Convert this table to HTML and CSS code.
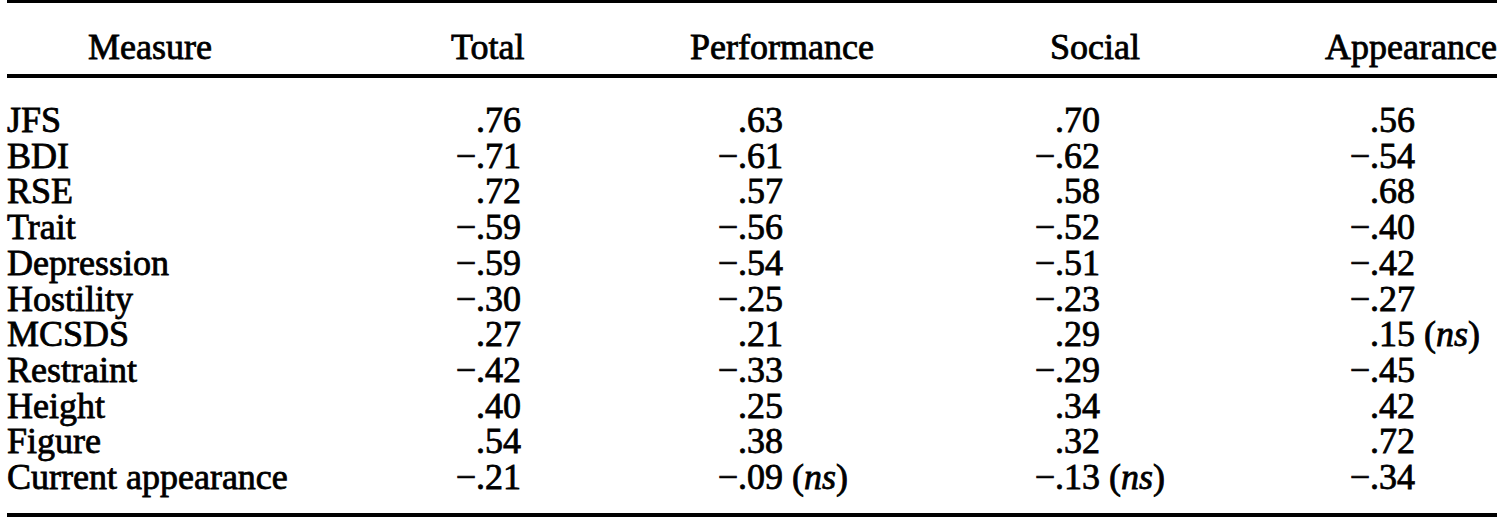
FILE: index.html
```html
<!DOCTYPE html>
<html>
<head>
    <meta charset="UTF-8">
    <title>Correlations of the subscales with other measures</title>
    <link rel="stylesheet" href="styles.css">
</head>
<body>
    <div class="table">
        <!-- Шапка таблицы -->
        <div class="grid head">
            <div class="th th-measure">Measure</div>
            <div class="th th-total">Total</div>
            <div class="th th-perf">Performance</div>
            <div class="th th-social">Social</div>
            <div class="th th-app">Appearance</div>
        </div>

        <!-- Строки: число выравнивается вправо, пометка (ns) висит справа -->
        <div class="grid body">
            <div class="label">JFS</div>
            <div class="num">.76</div><div class="note"></div>
            <div class="num">.63</div><div class="note"></div>
            <div class="num">.70</div><div class="note"></div>
            <div class="num">.56</div><div class="note"></div>

            <div class="label">BDI</div>
            <div class="num">&minus;.71</div><div class="note"></div>
            <div class="num">&minus;.61</div><div class="note"></div>
            <div class="num">&minus;.62</div><div class="note"></div>
            <div class="num">&minus;.54</div><div class="note"></div>

            <div class="label">RSE</div>
            <div class="num">.72</div><div class="note"></div>
            <div class="num">.57</div><div class="note"></div>
            <div class="num">.58</div><div class="note"></div>
            <div class="num">.68</div><div class="note"></div>

            <div class="label">Trait</div>
            <div class="num">&minus;.59</div><div class="note"></div>
            <div class="num">&minus;.56</div><div class="note"></div>
            <div class="num">&minus;.52</div><div class="note"></div>
            <div class="num">&minus;.40</div><div class="note"></div>

            <div class="label">Depression</div>
            <div class="num">&minus;.59</div><div class="note"></div>
            <div class="num">&minus;.54</div><div class="note"></div>
            <div class="num">&minus;.51</div><div class="note"></div>
            <div class="num">&minus;.42</div><div class="note"></div>

            <div class="label">Hostility</div>
            <div class="num">&minus;.30</div><div class="note"></div>
            <div class="num">&minus;.25</div><div class="note"></div>
            <div class="num">&minus;.23</div><div class="note"></div>
            <div class="num">&minus;.27</div><div class="note"></div>

            <div class="label">MCSDS</div>
            <div class="num">.27</div><div class="note"></div>
            <div class="num">.21</div><div class="note"></div>
            <div class="num">.29</div><div class="note"></div>
            <div class="num">.15</div><div class="note">&nbsp;(<i>ns</i>)</div>

            <div class="label">Restraint</div>
            <div class="num">&minus;.42</div><div class="note"></div>
            <div class="num">&minus;.33</div><div class="note"></div>
            <div class="num">&minus;.29</div><div class="note"></div>
            <div class="num">&minus;.45</div><div class="note"></div>

            <div class="label">Height</div>
            <div class="num">.40</div><div class="note"></div>
            <div class="num">.25</div><div class="note"></div>
            <div class="num">.34</div><div class="note"></div>
            <div class="num">.42</div><div class="note"></div>

            <div class="label">Figure</div>
            <div class="num">.54</div><div class="note"></div>
            <div class="num">.38</div><div class="note"></div>
            <div class="num">.32</div><div class="note"></div>
            <div class="num">.72</div><div class="note"></div>

            <div class="label">Current appearance</div>
            <div class="num">&minus;.21</div><div class="note"></div>
            <div class="num">&minus;.09</div><div class="note">&nbsp;(<i>ns</i>)</div>
            <div class="num">&minus;.13</div><div class="note">&nbsp;(<i>ns</i>)</div>
            <div class="num">&minus;.34</div><div class="note"></div>
        </div>
    </div>
</body>
</html>
```

FILE: styles.css
```css
body { /* Шрифт как в печатной таблице */
    margin: 0;
    background: #fff;
    color: #000;
    font-family: "Liberation Serif", "Times New Roman", serif;
    font-size: 36px;
    -webkit-text-stroke: 0.8px #000;
}

.table {
    width: 1490px;
    margin-left: 7px;
    border-top: 3px solid #000;
    border-bottom: 4px solid #000;
}

.grid { /* Общая сетка колонок для шапки и строк */
    display: grid;
    grid-template-columns: 393px 121px 79px 183px 117px 200px 100px 215px 82px;
}

.head {
    line-height: 36px;
    padding: 26px 0 9px;
    border-bottom: 4px solid #000;
}

.th {
    grid-column: span 2;
    white-space: nowrap;
}

.th-measure {
    grid-column: span 1;
    padding-left: 81px;
}
.th-total { padding-left: 51px; }
.th-perf { padding-left: 90px; }
.th-social { padding-left: 150px; }
.th-app { text-align: right; }

.body {
    line-height: 35.7px;
    padding: 25px 0 17px;
}

.label {
    white-space: nowrap;
}

.num {
    text-align: right;
    white-space: nowrap;
}

.note {
    white-space: nowrap;
}

.note i {
    font-style: italic;
}
```
